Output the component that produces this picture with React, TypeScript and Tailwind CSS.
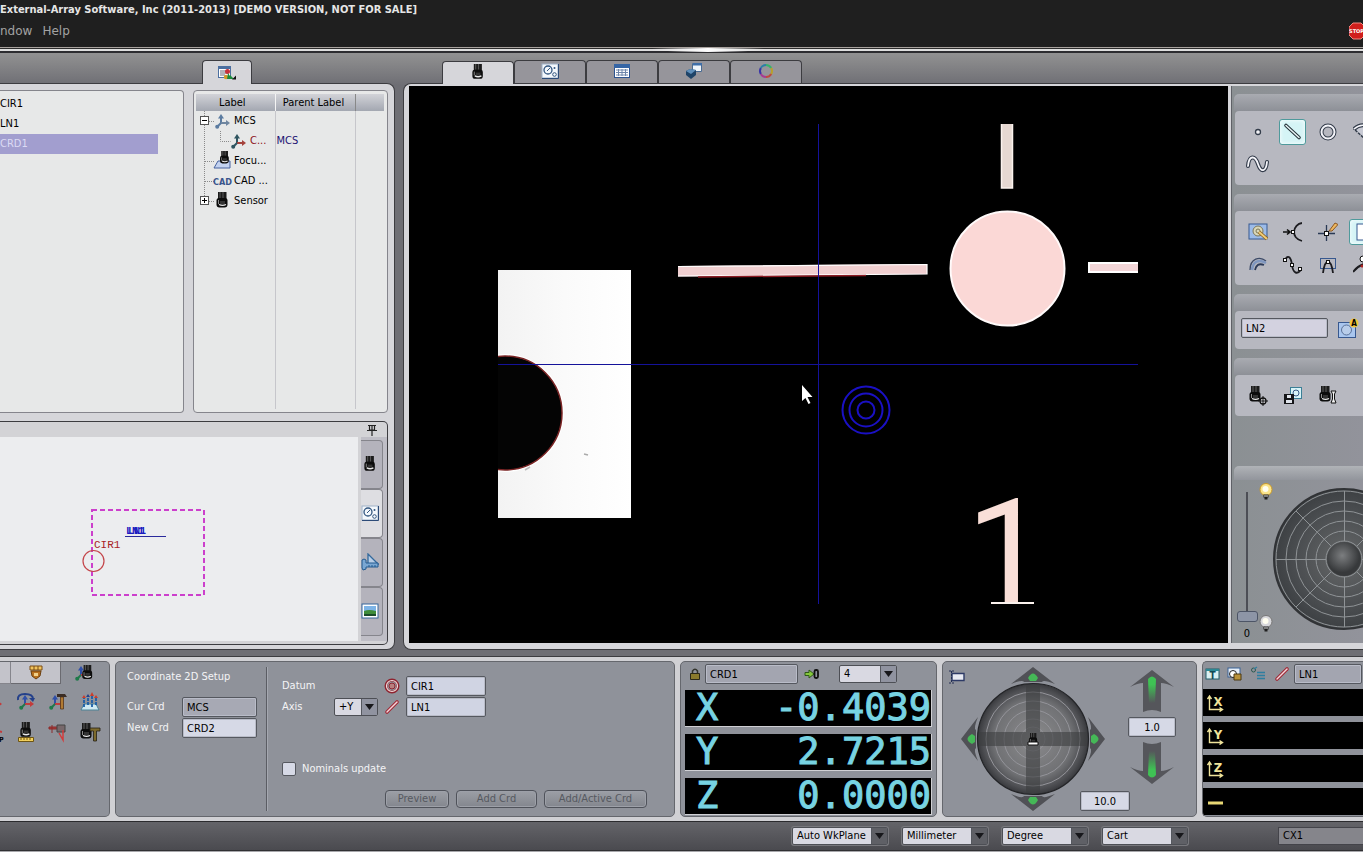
import React from "react";

type Kids = { children?: React.ReactNode };

/* ---------- icon parts ---------- */

function SensorShape({ t = "" }: { t?: string }) {
  return (
    <g transform={t}>
      <rect x="4" y="0" width="8.500" height="8" fill="#1b1b1b" />
      <path d="M6 0v6M9 0v6" stroke="#5d5d5d" strokeWidth="1" />
      <path d="M2.500 8.500Q2.500 6 5 6h6q2.500 0 2.500 2.500v4q0 3-3 3h-5q-3 0-3-3z" fill="#0c0c0c" />
      <path d="M4.500 8v4" stroke="#8a8a8a" />
      <path d="M6 9h5v3h-5z" fill="#333" />
      <path d="M5 12.500q3.500 1.800 7 0" stroke="#e8e8e8" strokeWidth="1.400" fill="none" />
    </g>
  );
}

function Ico({ children, s = 20 }: Kids & { s?: number }) {
  return (
    <svg width={s} height={s} viewBox={`0 0 ${s} ${s}`} className="shrink-0" aria-hidden="true">
      {children}
    </svg>
  );
}

function Axes({ t = "", x = "#c33b3b", y = "#2f4fa8", z = "#1f7a4a" }: { t?: string; x?: string; y?: string; z?: string }) {
  return (
    <g transform={t} fill="none" strokeWidth="2">
      <path d="M6 9V2" stroke={y} />
      <path d="M3 4.500L6 0l3 4.500z" fill={y} stroke="none" />
      <path d="M6 9h6" stroke={x} />
      <path d="M11 6l4 3-4 3z" fill={x} stroke="none" />
      <path d="M6 9l-4 4" stroke={z} />
      <circle cx="2.200" cy="12.800" r="2" fill={z} stroke="none" />
    </g>
  );
}

function GaugeIcon() {
  return (
    <Ico s={18}>
      <rect x="1" y="2" width="16" height="14" fill="#f4f8fc" stroke="#9fb2c8" />
      <path d="M1 16.500h16.500V2" stroke="#2c4b78" fill="none" />
      <circle cx="7" cy="8" r="4" fill="none" stroke="#31557f" strokeWidth="1.300" />
      <path d="M6 9l3-3" stroke="#31557f" />
      <circle cx="13.500" cy="6" r="1" fill="#31557f" />
      <circle cx="13.500" cy="12.500" r="1.800" fill="none" stroke="#31557f" />
    </Ico>
  );
}

const lcd = "font-['DejaVu_Sans_Mono','Liberation_Mono',monospace] [-webkit-text-stroke:1px_#77d3e2]";

/* ---------- controls ---------- */

function Field({ id, value, label, className = "" }: { id: string; value: string; label: string; className?: string }) {
  return (
    <input
      id={id}
      aria-label={label}
      defaultValue={value}
      className={`h-5 min-w-0 rounded-[2px] border border-[#55585f] px-1 text-[11px] text-black shadow-[inset_0_0_0_1px_#b9bcc8] outline-none ${className}`}
    />
  );
}

function Combo({ label, value, options, className = "", dark = false }: { label: string; value: string; options: string[]; className?: string; dark?: boolean }) {
  return (
    <div className={`relative flex h-[18px] rounded-[2px] border border-[#4d4f55] bg-[#d9d9e2] ${className}`}>
      <select aria-label={label} defaultValue={value} className="w-full appearance-none bg-transparent pl-1 text-[11px] leading-4 text-black outline-none">
        {options.map((o) => (
          <option key={o}>{o}</option>
        ))}
      </select>
      <span className={`pointer-events-none absolute inset-y-0 right-0 flex w-4 items-center justify-center border-l border-[#55585f] ${dark ? "bg-[#5f6066]" : "bg-[#9093a0]"}`}>
        <svg width="9" height="6" viewBox="0 0 9 6" aria-hidden="true">
          <path d="M0 0h9L4.500 6z" fill="#17171b" />
        </svg>
      </span>
    </div>
  );
}

function IconButton({ label, active = false, className = "", children }: Kids & { label: string; active?: boolean; className?: string }) {
  return (
    <button
      aria-label={label}
      className={`flex shrink-0 items-center justify-center ${active ? "rounded-[3px] border border-[#4f9a9c] bg-[#d5f4f6] shadow-[inset_0_0_4px_#ffffff]" : ""} ${className}`}
    >
      {children}
    </button>
  );
}

/* ---------- header ---------- */

function Header() {
  return (
    <header className="shrink-0">
      <div className="h-5 overflow-hidden whitespace-nowrap bg-[#1f1f1f] text-[11px] font-bold leading-[19px] text-[#e6e6e6]">
        External-Array Software, Inc (2011-2013) [DEMO VERSION, NOT FOR SALE]
      </div>
      <nav className="flex h-[27px] items-center gap-[10px] bg-[#1f1f1f] pb-[6px] font-['DejaVu_Sans',sans-serif] text-[12px] text-[#a3a3a3]">
        <a href="#window">ndow</a>
        <a href="#help">Help</a>
        <button aria-label="Stop" className="-mr-2 ml-auto">
          <svg width="22" height="18" viewBox="0 0 22 18" aria-hidden="true">
            <path d="M4 1h8l4 4v8l-4 4H4l-4-4V5z" fill="#d01f1c" stroke="#f08a80" />
            <text x="7.500" y="11" fontSize="5" fontWeight="bold" textAnchor="middle" fill="#fff">STOP</text>
          </svg>
        </button>
      </nav>
      <div className="h-px bg-[#a9a39f]" />
      <div className="flex h-px justify-center bg-[#2b2b2b] pl-[52px]">
        <div className="w-28 bg-[linear-gradient(90deg,transparent,#ffffff,transparent)]" />
      </div>
      <div className="flex h-0.5 justify-center bg-[#dedede] pl-[52px]">
        <div className="w-28 bg-[linear-gradient(90deg,transparent,#ffffff,transparent)]" />
      </div>
      <div className="flex h-0.5 justify-center bg-[#2d2d30] pl-[52px]">
        <div className="h-px w-20 bg-[linear-gradient(90deg,transparent,#ffffff,transparent)]" />
      </div>
    </header>
  );
}

/* ---------- left column ---------- */

function TreeGutter({ child = false, sign, last = false, children }: Kids & { child?: boolean; sign?: "+" | "-"; last?: boolean }) {
  return (
    <svg width={child ? 54 : 38} height="20" viewBox={`0 0 ${child ? 54 : 38} 20`} className="shrink-0" aria-hidden="true">
      <g stroke="#8a8a8a" strokeDasharray="1 1" fill="none">
        <path d={last ? "M8.500 0v6" : "M8.500 0v20"} />
        {child ? <path d="M24.500 0v10.500h10" /> : <path d="M9 10.500h9" />}
      </g>
      {sign && (
        <g>
          <rect x="4.500" y="5.500" width="8" height="8" fill="#fff" stroke="#555" />
          <path d={sign === "+" ? "M6 9.500h5M8.500 7v5" : "M6 9.500h5"} stroke="#000" />
        </g>
      )}
      {children}
    </svg>
  );
}

function TreeTable() {
  const rows = [
    { label: "MCS", parent: "", g: <TreeGutter sign="-"><Axes t="translate(19 3)" x="#6f86a0" y="#5b7ba0" z="#5b7ba0" /></TreeGutter> },
    { label: "C...", parent: "MCS", g: <TreeGutter child><Axes t="translate(35 3)" x="#a5423c" y="#2f5560" z="#2f5560" /></TreeGutter> },
    { label: "Focu...", parent: "", g: <TreeGutter><path d="M22 10h12v7H18z" fill="#c3d2f0" stroke="#46629f" /><SensorShape t="translate(22 0) scale(.8)" /></TreeGutter> },
    { label: "CAD ...", parent: "", g: <TreeGutter><text x="26.500" y="14" fontSize="9" fontWeight="bold" textAnchor="middle" fill="#3a558c" fontFamily="DejaVu Sans Condensed">CAD</text></TreeGutter> },
    { label: "Sensor", parent: "", g: <TreeGutter sign="+" last><SensorShape t="translate(18 1)" /></TreeGutter> },
  ];
  return (
    <table className="h-full w-full table-fixed border-collapse text-[11px] text-black">
      <colgroup>
        <col className="w-[79px]" />
        <col className="w-20" />
        <col />
      </colgroup>
      <thead>
        <tr className="h-[17px] bg-[linear-gradient(#d2d3d8,#a3a7b1)]">
          <th className="h-[17px] border-r border-[#f4f4f4] p-0 pr-[6px] text-center font-normal leading-4">Label</th>
          <th className="h-[17px] border-r border-[#888] p-0 pr-[3px] text-center font-normal leading-4">Parent Label</th>
          <th className="h-[17px] p-0" />
        </tr>
      </thead>
      <tbody>
        {rows.map((r, i) => (
          <tr key={r.label} className="h-5">
            <td className="h-5 border-r border-[#c6c6cb] p-0">
              <div className={`flex h-5 items-center overflow-hidden whitespace-nowrap ${i === 1 ? "text-[#8c1420]" : ""}`}>
                {r.g}
                {r.label}
              </div>
            </td>
            <td className="h-5 border-r border-[#c6c6cb] p-0 pl-px text-[#1c1272]">{r.parent}</td>
            <td className="h-5 p-0" />
          </tr>
        ))}
        <tr>
          <td className="border-r border-[#c6c6cb]" />
          <td className="border-r border-[#c6c6cb]" />
          <td />
        </tr>
      </tbody>
    </table>
  );
}

function SideTab({ label, active = false, children }: Kids & { label: string; active?: boolean }) {
  return (
    <button
      aria-label={label}
      className={`flex h-[49px] w-[22px] items-center justify-center rounded-r border border-l-0 border-[#85858c] pb-0.5 pr-[3px] ${active ? "bg-[#dedee2]" : "bg-[#b4b3bc]"}`}
    >
      {children}
    </button>
  );
}

function LeftColumn() {
  return (
    <section className="flex w-[395px] shrink-0 flex-col">
      <div className="flex h-[30px] items-end pl-[202px]">
        <button aria-label="Labels" className="relative z-10 -mb-px flex h-[24px] w-[50px] items-center justify-center rounded-t-[4px] border border-b-0 border-[#3c3c40] bg-[#d6d6da]">
          <Ico s={20}>
            <rect x="1.500" y="3.500" width="12" height="11" fill="#fff" stroke="#4c6fa0" />
            <path d="M1 3h13v3H1z" fill="#4c6fa0" />
            <path d="M3 8h7M3 10h7M3 12h5" stroke="#667" />
            <circle cx="10.500" cy="8.500" r="2.500" fill="#c8303b" />
            <circle cx="9" cy="14" r="2.200" fill="#cf9a2c" />
            <path d="M11 10l4 6h-5zM13 12l4 4h-4z" fill="#1c8a3a" />
            <path d="M15 16.500l4-4v4z" fill="#111" />
          </Ico>
        </button>
      </div>
      <div className="flex flex-1 flex-col rounded-r-lg border border-l-0 border-[#3c3c40] bg-[#d6d6da] pb-1 pr-[6px] pt-[6px]">
        <div className="flex h-[323px] gap-[9px]">
          <ul className="w-[184px] rounded-r-[4px] border border-l-0 border-[#85858c] bg-[#e7e8e8] pr-[25px] pt-[3px] text-[11px] leading-5 text-black">
            <li>CIR1</li>
            <li>LN1</li>
            <li className="bg-[#a29ecf] text-[#dcdaf4]">CRD1</li>
          </ul>
          <div className="flex-1 rounded-[4px] border border-[#85858c] bg-[#e7e8e8] p-[3px] pl-0.5">
            <TreeTable />
          </div>
        </div>
        <div className="mt-2 flex flex-1 flex-col rounded-r-[5px] border border-l-0 border-[#3c3c40] bg-[#d3d3d6] pb-[3px]">
          <div className="flex h-[15px] justify-end pr-[9px]">
            <button aria-label="Pin panel">
              <svg width="12" height="12" viewBox="0 0 12 12" aria-hidden="true">
                <path d="M2 1.500h8M3.500 1v5h5V1M6 1v5M1 6.500h10M6 7v5" stroke="#222" fill="none" strokeWidth="1.200" />
              </svg>
            </button>
          </div>
          <div className="flex flex-1">
            <div className="flex-1 overflow-hidden bg-[#ecedef]">
              <svg width="356" height="204" viewBox="0 0 356 204" aria-label="Part view">
                <rect x="92" y="73" width="112" height="85" fill="none" stroke="#cc3fcc" strokeWidth="2" strokeDasharray="5 3" />
                <circle cx="93.500" cy="124" r="10.500" fill="none" stroke="#c4454a" strokeWidth="1.200" />
                <text x="94" y="111" fontSize="11" fill="#a82226" fontFamily="Liberation Mono">CIR1</text>
                <text x="126" y="97" fontSize="10" fontWeight="bold" fill="#1a1ac0" fontFamily="Liberation Mono">LN1</text>
                <text x="128" y="97" fontSize="10" fontWeight="bold" fill="#1a1ac0" fontFamily="Liberation Mono">LN1</text>
                <path d="M125 99.500h41" stroke="#2a2a9c" strokeWidth="1.200" />
              </svg>
            </div>
            <div className="ml-[3px] w-[26px] bg-[#bfbec6] pt-[3px]">
              <SideTab label="Sensor view"><Ico s={16}><SensorShape t="scale(.95)" /></Ico></SideTab>
              <SideTab label="Part view" active><GaugeIcon /></SideTab>
              <SideTab label="Measure view">
                <Ico s={18}>
                  <path d="M7 1v10h10z" fill="#b7cde6" stroke="#32699c" strokeWidth="1.300" />
                  <path d="M1 7l2-1 2 1v3h12v4H5v2l-3 1-1-2z" fill="#7aa7d2" stroke="#235b90" />
                  <path d="M8 12v2M11 12v2M14 12v2" stroke="#235b90" />
                </Ico>
              </SideTab>
              <SideTab label="Image view">
                <Ico s={18}>
                  <rect x="1" y="2" width="16" height="14" fill="#fff" stroke="#35679b" />
                  <rect x="3" y="4" width="12" height="5" fill="#7db4e6" />
                  <path d="M3 9q5-2 12 0v5H3z" fill="#3f8d3a" />
                  <path d="M3 12h12v2H3z" fill="#1b4d2a" />
                </Ico>
              </SideTab>
            </div>
          </div>
        </div>
      </div>
    </section>
  );
}

/* ---------- camera view ---------- */

function ViewTabs() {
  const base = "flex h-[23px] w-[72px] items-center justify-center rounded-t-[4px] border border-b-0 border-[#3c3c40] pb-0.5";
  return (
    <div className="flex h-[30px] items-end pl-[39px]">
      <button aria-label="Camera" className={`${base} relative z-10 -mb-px h-6 bg-[#d6d6da]`}><Ico s={16}><SensorShape t="scale(.95)" /></Ico></button>
      <button aria-label="Part" className={`${base} bg-[#96959b]`}><GaugeIcon /></button>
      <button aria-label="Table" className={`${base} bg-[#96959b]`}>
        <Ico s={18}>
          <rect x="1.500" y="2.500" width="15" height="13" fill="#fff" stroke="#2c5490" />
          <path d="M1 2h16v4H1z" fill="#3565a5" />
          <path d="M3 8h12M3 10.500h12M3 13h12M5.500 7v7M9 7v7M12.500 7v7" stroke="#6f87ab" />
        </Ico>
      </button>
      <button aria-label="Report" className={`${base} bg-[#96959b]`}>
        <Ico s={18}>
          <path d="M7.500 1.500h9v8h-9z" fill="#eef4fa" stroke="#4a6b92" />
          <path d="M8 1h9v2.500H8z" fill="#3f6ea8" />
          <path d="M1 9l4-2 6 1v5l-5 4-5-4z" fill="#1f4468" />
          <path d="M1 9l5 3 5-4-6-1z" fill="#5f90bc" />
        </Ico>
      </button>
      <button aria-label="Colour map" className={`${base} bg-[#96959b]`}>
        <Ico s={18}>
          <g fill="none" strokeWidth="2">
            <path d="M9 3a6 6 0 0 1 5.200 3" stroke="#35b46c" />
            <path d="M14.200 6a6 6 0 0 1 0 6" stroke="#b8a02c" />
            <path d="M14.200 12A6 6 0 0 1 9 15" stroke="#c04a3c" />
            <path d="M9 15a6 6 0 0 1-5.200-3" stroke="#a83a92" />
            <path d="M3.800 12a6 6 0 0 1 0-6" stroke="#3a35a8" />
            <path d="M3.800 6A6 6 0 0 1 9 3" stroke="#2c7fa6" />
          </g>
        </Ico>
      </button>
    </div>
  );
}

function CameraView() {
  return (
    <div className="flex min-w-0 flex-1 items-center justify-center overflow-hidden bg-black pb-0.5 pr-0.5">
      <svg width="640" height="480" viewBox="0 0 640 480" className="shrink-0 overflow-visible" role="img" aria-label="Camera image">
        <defs>
          <clipPath id="part"><rect x="0" y="146" width="133" height="248" /></clipPath>
          <linearGradient id="paper" x1="0" x2="1"><stop offset="0" stopColor="#f3f3f3" /><stop offset=".5" stopColor="#fafafa" /><stop offset="1" stopColor="#fff" /></linearGradient>
        </defs>
        <rect x="0" y="146" width="133" height="248" fill="url(#paper)" />
        <g clipPath="url(#part)">
          <circle cx="7" cy="289" r="59" fill="#fff" />
          <circle cx="7" cy="289" r="57" fill="#040404" stroke="#7a2424" strokeWidth="1.500" />
        </g>
        <path d="M86 330l4 1" stroke="#aaa" strokeWidth="1.500" />
        <path d="M27 346l5-3" stroke="#bbb" strokeWidth="1.500" />
        <path d="M180 142l249-2v10l-249 2.500z" fill="#f0cfd0" />
        <path d="M180 142.500l249-2v9.500l-249 2" fill="none" stroke="#fff" strokeWidth="1.200" />
        <path d="M200 153l168-1.600" stroke="#8c1a22" strokeWidth="1.500" />
        <rect x="503.500" y="0" width="11" height="64" fill="#e6d8d2" />
        <path d="M503.500 0v64h11V0" fill="none" stroke="#fbf2ee" strokeWidth="1.500" />
        <circle cx="509.500" cy="144.500" r="57" fill="#fbd8d6" stroke="#fffafa" strokeWidth="2" />
        <path d="M640 139h-49v9h49" fill="#f3d6d8" stroke="#fff" strokeWidth="2" />
        <text x="468" y="479" fontSize="146" fill="#f9dfd8" fontFamily="Roboto, sans-serif">1</text>
        <rect x="493" y="478" width="43" height="2" fill="#fbf2ee" />
        <path d="M320.500 0v480M0 240.500h640" stroke="#14129a" strokeWidth="1" />
        <g fill="none" stroke="#1a10c4" strokeWidth="2">
          <circle cx="368" cy="286" r="23.500" />
          <circle cx="368" cy="286" r="16.500" />
          <circle cx="368" cy="286" r="8.500" />
        </g>
        <path d="M304 261v16l3.500-3 3 6 2-1-3-6h5z" fill="#fff" />
      </svg>
    </div>
  );
}

/* ---------- tool sidebar ---------- */

function Group({ title, className = "", children }: Kids & { title: string; className?: string }) {
  return (
    <section aria-label={title} className="mb-[9px]">
      <div className="ml-0.5 h-[17px] rounded-tl-[5px] bg-[linear-gradient(#a9abb1,#8d9097)]" />
      <div className={`ml-[3px] overflow-hidden rounded-l-[4px] bg-[#b7b8c0] ${className}`}>{children}</div>
    </section>
  );
}

const cell = "h-[26px] w-[27px] mx-1";

function Bulb({ on = false }: { on?: boolean }) {
  return (
    <svg width="14" height="17" viewBox="0 0 14 17" aria-hidden="true">
      <circle cx="7" cy="6.500" r="6" fill={on ? "#fbe48a" : "#d8d8dc"} stroke={on ? "#c99a2c" : "#777"} />
      <circle cx="6.500" cy="6" r="3" fill="#fffef0" />
      <path d="M4.500 11.500h5v3h-1v2h-3v-2h-1z" fill="#1f1f1f" />
      <path d="M5 13h4" stroke="#ddd" />
    </svg>
  );
}

function Sidebar() {
  return (
    <aside className="ml-[3px] flex w-[132px] shrink-0 flex-col overflow-hidden border-l border-[#5f6167] bg-[linear-gradient(90deg,#8b9093,#92939b)] pt-2">
      <Group title="Features" className="h-[74px]">
        <div className="flex w-[150px] flex-wrap gap-y-[6px] pl-[5px] pt-[8px]">
          <IconButton label="Point" className={cell}><Ico><circle cx="10" cy="10" r="2.500" fill="#f2f2f6" stroke="#333c4a" strokeWidth="1.300" /></Ico></IconButton>
          <IconButton label="Line" active className={cell}><Ico><path d="M3 3.500l13 12" stroke="#26333a" strokeWidth="3.600" strokeLinecap="round" /><path d="M3 3.500l13 12" stroke="#e8f4f6" strokeWidth="1.500" strokeLinecap="round" /></Ico></IconButton>
          <IconButton label="Circle" className={cell}><Ico><circle cx="10" cy="10" r="6.500" fill="none" stroke="#333c4a" strokeWidth="4" /><circle cx="10" cy="10" r="6.500" fill="none" stroke="#f5f5fa" strokeWidth="2" /></Ico></IconButton>
          <IconButton label="Arc" className={cell}><Ico><path d="M1 7q8-7 16-1L12 17z" fill="#c8cad4" stroke="#333c4a" strokeWidth="1.500" strokeDasharray="3 1" /><path d="M1 7q8-7 16-1" fill="none" stroke="#333c4a" strokeWidth="4" /><path d="M1 7q8-7 16-1" fill="none" stroke="#f5f5fa" strokeWidth="1.500" /></Ico></IconButton>
          <IconButton label="Curve" className={cell}><svg width="24" height="20" viewBox="0 0 24 20" aria-hidden="true"><path d="M2 12C3 1 9 1 12 10s8 8 9-2" fill="none" stroke="#333c4a" strokeWidth="4" strokeLinecap="round" /><path d="M2 12C3 1 9 1 12 10s8 8 9-2" fill="none" stroke="#f5f5fa" strokeWidth="1.800" strokeLinecap="round" /></svg></IconButton>
        </div>
      </Group>
      <Group title="Probing tools" className="h-[74px]">
        <div className="flex w-[150px] flex-wrap gap-y-[7px] pl-[5px] pt-[8px]">
          <IconButton label="Pick" className={cell}><Ico><rect x="1" y="2" width="18" height="15" fill="#9cbbe8" stroke="#37588f" /><circle cx="10" cy="9" r="5" fill="#d9d7b8" stroke="#7c775a" /><circle cx="10" cy="9" r="2" fill="none" stroke="#7c775a" /><path d="M11 10l8 7" stroke="#8a5f1c" strokeWidth="3.500" /><path d="M11 10l8 7" stroke="#f0cd78" strokeWidth="2" /></Ico></IconButton>
          <IconButton label="Edge" className={cell}><Ico><path d="M19 1c-9 1-12 15 0 18" fill="none" stroke="#1c1c20" strokeWidth="1.800" /><path d="M0 10h6M4 7.500l3 2.500-3 2.500" fill="none" stroke="#111" strokeWidth="1.600" /><rect x="8.500" y="8.500" width="3" height="3" fill="#fff" stroke="#111" /></Ico></IconButton>
          <IconButton label="Cross" className={cell}><Ico><path d="M8.500 3v16M0 11.500h17" stroke="#2a3a55" strokeWidth="1.300" /><rect x="6.500" y="9.500" width="4" height="4" fill="#fff" stroke="#111" /><path d="M11 9l6-8 3 1.500-6 6.500z" fill="#eeb860" stroke="#8a5620" /></Ico></IconButton>
          <IconButton label="Strip" active className={cell}><Ico><rect x="4" y="2" width="8" height="16" fill="#fff" stroke="#37588f" /></Ico></IconButton>
          <IconButton label="Arc band" className={cell}><Ico><path d="M2 15C2 3 12 1 18 6" stroke="#3d4b68" strokeWidth="1.300" fill="none" /><path d="M4 15C5 6 11 4 18 8" stroke="#7f97c0" strokeWidth="2.500" fill="none" /><path d="M7 15C8 10 11 8 16 10" stroke="#2b3a58" strokeWidth="1.800" fill="none" /></Ico></IconButton>
          <IconButton label="Trace" className={cell}><Ico><path d="M2 5C5-1 8 2 9 10s5 10 9 5" fill="none" stroke="#1c1c20" strokeWidth="1.800" /><g fill="#fff" stroke="#111"><rect x=".5" y="3.500" width="3" height="3" /><rect x="7.500" y="8.500" width="3" height="3" /><rect x="15.500" y="12.500" width="3" height="3" /></g></Ico></IconButton>
          <IconButton label="Peak" className={cell}><Ico><rect x="2.500" y="3.500" width="15" height="10" fill="none" stroke="#37588f" /><path d="M5 18C7 3 13 3 15 18" fill="none" stroke="#1c1c20" strokeWidth="1.800" /><rect x="8.500" y="5.500" width="3" height="3" fill="#fff" stroke="#111" /></Ico></IconButton>
          <IconButton label="Tangent" className={cell}><Ico><path d="M0 17Q6 9 16 8" fill="none" stroke="#1c1c20" strokeWidth="2" /><circle cx="10" cy="4" r="3" fill="#fff" stroke="#111" /><circle cx="9" cy="11" r="1.500" fill="#a22" /></Ico></IconButton>
        </div>
      </Group>
      <Group title="Name" className="flex h-[38px] items-start gap-[9px] pl-[6px] pt-[7px]">
        <Field id="feature" label="Feature name" value="LN2" className="w-[87px] shrink-0 bg-[#d3d2e0]" />
        <IconButton label="Auto name">
          <Ico s={22}><rect x="1.500" y="4.500" width="17" height="15" fill="#a9c6ee" stroke="#37588f" /><circle cx="9.500" cy="12" r="5" fill="#b8cdea" stroke="#5b7299" /><circle cx="17" cy="5" r="4.500" fill="#f0c63c" /><text x="17" y="8" fontSize="8" fontWeight="bold" textAnchor="middle">A</text></Ico>
        </IconButton>
      </Group>
      <Group title="Sensor tools" className="flex h-[41px] items-center pl-[5px]">
        <IconButton label="Sensor target" className={cell}><Ico><SensorShape t="translate(-1 0)" /><circle cx="15" cy="15" r="3" fill="#e8e8ee" stroke="#111" strokeWidth="1.300" /><path d="M15 10v10M10 15h10" stroke="#111" /></Ico></IconButton>
        <IconButton label="Save sensor" className={cell}><Ico><rect x="7.500" y="1.500" width="11" height="11" fill="#d8f4f8" stroke="#3b7f96" /><circle cx="13" cy="7" r="3" fill="none" stroke="#3a5a86" /><path d="M1 8h10v10H1z" fill="#151518" /><path d="M4 9h4v3H4zM3 14h6v3H3z" fill="#dfe3ea" /></Ico></IconButton>
        <IconButton label="Sensor calibration" className={cell}><Ico><SensorShape t="translate(-1 0)" /><path d="M13 5h5l-1.500 3v5l1.500 4h-5l1.500-4V8z" fill="#f2f2f2" stroke="#111" /></Ico></IconButton>
      </Group>
      <section aria-label="Light" className="mt-auto">
        <div className="ml-0.5 h-[14px] rounded-tl-[5px] bg-[linear-gradient(#b0b3b7,#92959c)]" />
        <div className="flex h-[163px]">
          <div className="ml-1 flex w-[22px] flex-col items-center pt-3">
            <input
              type="range"
              min={0}
              max={100}
              defaultValue={0}
              aria-label="Light intensity"
              className="m-0 h-[130px] w-[22px] appearance-none bg-transparent bg-[linear-gradient(#4c4e55,#4c4e55)] bg-[length:2px_100%] bg-center bg-no-repeat [direction:rtl] [writing-mode:vertical-lr] [&::-webkit-slider-thumb]:h-[11px] [&::-webkit-slider-thumb]:w-[21px] [&::-webkit-slider-thumb]:appearance-none [&::-webkit-slider-thumb]:rounded-[3px] [&::-webkit-slider-thumb]:border [&::-webkit-slider-thumb]:border-[#4d5566] [&::-webkit-slider-thumb]:bg-[#8d95a6]"
            />
            <output className="pt-1 text-[11px] leading-4 text-black">0</output>
          </div>
          <div className="ml-px flex w-[14px] shrink-0 flex-col justify-between pb-[11px] pt-[3px]">
            <Bulb on />
            <Bulb />
          </div>
          <svg width="142" height="142" viewBox="-71 -71 142 142" className="mt-2 shrink-0" role="img" aria-label="Ring light">
            <defs>
              <radialGradient id="ring"><stop offset="0" stopColor="#666869" /><stop offset=".7" stopColor="#4a4d50" /><stop offset="1" stopColor="#3d4043" /></radialGradient>
              <radialGradient id="knob" cx=".45" cy=".4"><stop offset="0" stopColor="#7c7e80" /><stop offset="1" stopColor="#37393b" /></radialGradient>
            </defs>
            <circle r="70" fill="url(#ring)" stroke="#313336" strokeWidth="2" />
            <g fill="none" stroke="#8f9396" strokeWidth="1">
              <circle r="68" /><circle r="58" /><circle r="48" /><circle r="38" /><circle r="28" /><circle r="18" />
              <path d="M-68 .5h50M18 .5h50M.5-68v50M.5 18v50M-48-48l35 35M48 48l-35-35M-48 48l35-35M48-48l-35 35" />
            </g>
            <circle r="17" fill="url(#knob)" />
          </svg>
        </div>
      </section>
    </aside>
  );
}

/* ---------- bottom dock ---------- */

const panel = "rounded-[5px] border border-[#65676d] bg-[#8f929a]";

function AxisButtons() {
  return (
    <div className={`w-[110px] shrink-0 overflow-hidden ${panel} rounded-l-none border-l-0`}>
      <div className="flex h-[22px]">
        <button aria-label="Setup" className="w-[11px] border-b border-r border-[#85858c] bg-[#c3c3ca]" />
        <button aria-label="Machine" className="flex w-[50px] items-center justify-center border-b border-r border-[#6a6a70] bg-[#c3c3ca]">
          <Ico s={16}><path d="M2 1h12v4H2z" fill="#f2c45c" stroke="#7a4c14" /><path d="M6 1v4M10 1v4" stroke="#7a4c14" /><path d="M3 6h10l-1 5-4 3-4-3z" fill="#b8701f" stroke="#6b3f10" /><path d="M6 8h4v3H6z" fill="#f0d08a" /></Ico>
        </button>
        <button aria-label="Coordinates" className="flex flex-1 items-center justify-center"><svg width="20" height="16" viewBox="0 0 20 16" aria-hidden="true"><Axes t="translate(0 1)" /><SensorShape t="translate(5 0) scale(.9)" /></svg></button>
      </div>
      <div className="-ml-[22px] flex w-[128px] flex-wrap gap-y-[9px] pt-[7px]">
        <button aria-label="Rotate X" className="flex w-8 justify-center"><svg width="22" height="22" viewBox="0 0 22 22" aria-hidden="true"><Axes t="translate(4 4)" /></svg></button>
        <button aria-label="Rotate Y" className="flex w-8 justify-center"><svg width="20" height="22" viewBox="0 0 20 22" aria-hidden="true"><Axes t="translate(3 4)" /><path d="M2 9q-1-6 7-6t8 5" stroke="#24408a" strokeWidth="2" fill="none" /><path d="M13 7h6l-2 4z" fill="#24408a" /></svg></button>
        <button aria-label="Align axes" className="flex w-8 justify-center"><svg width="20" height="22" viewBox="0 0 20 22" aria-hidden="true"><Axes t="translate(1 4)" /><path d="M12.500 6h3v12h-3z" fill="#b07a32" stroke="#54351a" strokeWidth=".8" /><path d="M9 3h8l2 3h-10z" fill="#3a2c24" /></svg></button>
        <button aria-label="Surface" className="flex w-8 justify-center"><svg width="20" height="22" viewBox="0 0 20 22" aria-hidden="true"><path d="M4 13h12l3 6H1z" fill="#cfe9f2" stroke="#4a8296" /><path d="M4 16V7M8 14V5M12 16V5M16 14V7" stroke="#1a5ca6" strokeWidth="1.800" strokeDasharray="3 1" /><path d="M2 7l2-3 2 3M10 5l2-4 2 4M14 7l2-3 2 3" fill="#cc3e2a" /><path d="M6 6l2-3 2 3" fill="#24408a" /></svg></button>
        <button aria-label="Probe" className="flex w-8 justify-center"><svg width="22" height="22" viewBox="0 0 22 22" aria-hidden="true"><path d="M14 9l5 1" stroke="#c33b3b" strokeWidth="2" /><text x="16" y="20" fontSize="7" fontWeight="bold">P</text></svg></button>
        <button aria-label="Scale" className="flex w-8 justify-center"><svg width="20" height="22" viewBox="0 0 20 22" aria-hidden="true"><SensorShape t="translate(2 0) scale(.95)" /><path d="M2.500 15.500h15v4h-15z" fill="#f2d05c" stroke="#6e5514" /><path d="M5 16v2M8 16v2M11 16v2M14 16v2" stroke="#6e5514" /></svg></button>
        <button aria-label="Caliper" className="flex w-8 justify-center"><svg width="20" height="22" viewBox="0 0 20 22" aria-hidden="true"><path d="M1 5h10v2H1zM4 3v8" fill="#a83c3c" stroke="#8b2a2a" /><path d="M9 3h8v7H9z" fill="#77686b" stroke="#444" /><path d="M11 11l4 7V8" stroke="#d23b3b" strokeWidth="1.500" fill="none" /></svg></button>
        <button aria-label="Sensor setup" className="flex w-8 justify-center"><svg width="22" height="22" viewBox="0 0 22 22" aria-hidden="true"><SensorShape t="translate(-1 1)" /><path d="M11 6h10v3h-3.500v10h-3V9H11z" fill="#7d6a2c" stroke="#231f14" strokeWidth=".8" /></svg></button>
      </div>
    </div>
  );
}

function CirIcon() {
  return <Ico s={16}><circle cx="8" cy="8" r="6" fill="none" stroke="#8f2430" strokeWidth="3" /><circle cx="8" cy="8" r="5.500" fill="none" stroke="#f2dcdc" strokeWidth="1.200" /><circle cx="8" cy="8" r="3" fill="#b8807f" stroke="#8f2430" /></Ico>;
}

function LineIcon() {
  return <Ico s={16}><path d="M3 13L13 3" stroke="#a02836" strokeWidth="3.600" strokeLinecap="round" /><path d="M3 13L13 3" stroke="#f4d6da" strokeWidth="1.400" strokeLinecap="round" /></Ico>;
}

function CoordinateSetup() {
  const btn = "h-[18px] rounded-[4px] border border-[#4f525a] bg-[linear-gradient(#9c9fa6,#83868e)] text-[11px] leading-4 text-[#565960] shadow-[inset_0_0_0_1px_#9da0a8]";
  return (
    <form className={`flex w-[560px] shrink-0 ${panel} text-[11px] text-[#f4f4f6]`} onSubmit={(e) => e.preventDefault()}>
      <div className="my-[5px] w-[151px] border-r border-[#5b5d64] pl-[11px] shadow-[1px_0_0_#a5a8b0]">
        <h2 className="pt-[2px] leading-4">Coordinate 2D Setup</h2>
        <div className="mt-3 flex items-center"><label htmlFor="cur" className="w-[55px]">Cur Crd</label><Field id="cur" label="Cur Crd" value="MCS" className="w-[75px] bg-[#a7a9b4]" /></div>
        <div className="mt-px flex items-center"><label htmlFor="new" className="w-[55px]">New Crd</label><Field id="new" label="New Crd" value="CRD2" className="w-[75px] bg-[#d6d9e6]" /></div>
      </div>
      <div className="flex flex-1 flex-col pb-2 pl-[15px] pr-[27px] pt-[14px]">
        <div className="flex items-center"><label htmlFor="datum" className="w-[102px]">Datum</label><CirIcon /><Field id="datum" label="Datum" value="CIR1" className="ml-[6px] w-20 bg-[#d0d4e3]" /></div>
        <div className="mt-px flex items-center"><span className="w-[52px]">Axis</span><Combo label="Axis" value="+Y" options={["+X", "+Y", "-X", "-Y"]} className="mr-[6px] w-11" /><LineIcon /><Field id="axis" label="Axis feature" value="LN1" className="ml-[6px] w-20 bg-[#d0d4e3]" /></div>
        <label className="mt-11 flex items-center gap-[6px]">
          <input type="checkbox" className="m-0 h-[14px] w-[14px] appearance-none rounded-[2px] border border-[#55585f] bg-[#d6d9e6]" />
          Nominals update
        </label>
        <div className="mt-auto flex justify-end gap-[7px]">
          <button className={`${btn} w-16`}>Preview</button>
          <button className={`${btn} w-[81px]`}>Add Crd</button>
          <button className={`${btn} w-[103px]`}>Add/Active Crd</button>
        </div>
      </div>
    </form>
  );
}

function Readout() {
  return (
    <div className={`w-[257px] shrink-0 ${panel} px-1`}>
      <div className="flex h-[24px] items-center">
        <span className="flex w-5 justify-center"><svg width="10" height="12" viewBox="0 0 10 12" aria-hidden="true"><path d="M2.500 6V3q2.500-3.500 5 0v3" fill="none" stroke="#33342c" strokeWidth="1.500" /><path d="M.5 5.500h9v6h-9z" fill="#8a7a2c" stroke="#2b2818" /></svg></span>
        <Field id="crd" label="Coordinate system" value="CRD1" className="w-[93px] bg-[#a3a5b0]" />
        <button aria-label="Zero" className="ml-[6px] mr-[19px]"><svg width="16" height="12" viewBox="0 0 16 12" aria-hidden="true"><path d="M1 4.500h4V2l5 4-5 4V7.500H1z" fill="#86c83c" stroke="#2e5a18" /><rect x="10.500" y="2" width="3.500" height="8" rx="1.500" fill="none" stroke="#111" strokeWidth="1.800" /></svg></button>
        <Combo label="Decimals" value="4" options={["2", "3", "4"]} className="w-[58px]" />
      </div>
      <dl className="flex flex-col gap-[7px] pt-1">
        {[["X", "-0.4039"], ["Y", "2.7215"], ["Z", "0.0000"]].map(([a, v]) => (
          <div key={a} className={`flex h-[37px] items-center justify-between border-b border-r border-[#d0d0d4] bg-black text-[37px] leading-9 text-[#77d3e2] ${lcd}`}>
            <dt className="pl-[11px]">{a}</dt>
            <dd>{v}</dd>
          </div>
        ))}
      </dl>
    </div>
  );
}

function JogPanel() {
  return (
    <div className={`relative flex w-[255px] shrink-0 items-start ${panel}`}>
      <button aria-label="Jog mode" className="absolute left-[5px] top-[8px]"><svg width="18" height="14" viewBox="0 0 18 14" aria-hidden="true"><path d="M4 3.500h12v7H4z" fill="#e8eaf2" stroke="#2d3a66" strokeWidth="1.400" /><path d="M1 1h5M1 13h5M3.500 1v12" stroke="#222d52" strokeDasharray="2 1" /></svg></button>
      <svg width="144" height="144" viewBox="-72 -72 144 144" className="ml-[18px] mt-[5px] shrink-0" role="img" aria-label="Joystick">
        <defs>
          <radialGradient id="stick"><stop offset="0" stopColor="#8c8c8e" /><stop offset=".7" stopColor="#707174" /><stop offset=".9" stopColor="#4e4f53" /><stop offset="1" stopColor="#38393d" /></radialGradient>
        </defs>
        {[0, 90, 180, 270].map((a) => (
          <g key={a} transform={`rotate(${a})`}>
            <path d="M0-72L22-55Q10-60 9-57h-18Q-10-60-22-55z" fill="#505156" />
            <path d="M-5-61q5-9 10 0l-2 3h-6z" fill="#45b857" />
          </g>
        ))}
        <circle r="55.500" fill="url(#stick)" stroke="#232427" strokeWidth="1.200" />
        <g fill="none" stroke="#94949a" strokeWidth="1"><circle r="47" /><circle r="38" /><circle r="29" /><circle r="20" /><circle r="12" /></g>
        <path d="M-7-54h14v108h-14zM-54-7h108v14h-108z" fill="#3c3d40" fillOpacity=".6" />
        <SensorShape t="translate(-6 -6) scale(.75)" />
        <path d="M-5 3h10v3h-10z" fill="#fff" stroke="#111" />
      </svg>
      <div className="ml-[23px] flex flex-col items-center pt-2">
        <button aria-label="Z up"><svg width="44" height="42" viewBox="0 0 44 42" className="block" aria-hidden="true"><defs><linearGradient id="glow" x1="0" x2="0" y1="0" y2="1"><stop offset=".3" stopColor="#3fc254" /><stop offset="1" stopColor="#55565b" /></linearGradient></defs><path d="M22 0l22 17q-8-4-13-4v29q-9-4-18 0V13q-5 0-13 4z" fill="#55565b" /><path d="M18 9q4-5 8 0l-1 24h-6z" fill="url(#glow)" /></svg></button>
        <Field id="zstep" label="Z step" value="1.0" className="mt-[5px] w-12 bg-[#d6d9e6] text-center" />
        <button aria-label="Z down" className="mt-[5px]"><svg width="44" height="42" viewBox="0 0 44 42" className="block" aria-hidden="true"><g transform="rotate(180 22 21)"><path d="M22 0l22 17q-8-4-13-4v29q-9-4-18 0V13q-5 0-13 4z" fill="#55565b" /><path d="M18 9q4-5 8 0l-1 24h-6z" fill="url(#glow)" /></g></svg></button>
      </div>
      <Field id="xystep" label="XY step" value="10.0" className="absolute bottom-[5px] right-[66px] w-[50px] bg-[#d6d9e6] text-center" />
    </div>
  );
}

function ResultPanel() {
  return (
    <div className={`min-w-0 flex-1 overflow-hidden ${panel} rounded-r-none border-r-0`}>
      <div className="flex h-[24px] items-center pl-[2px]">
        <Ico s={16}><rect x="1" y="3" width="13" height="10" fill="#d9f0f2" stroke="#235f6b" /><path d="M1 3h13v2H1z" fill="#2c8894" /><text x="7.500" y="13" fontSize="10" fontWeight="bold" textAnchor="middle" fill="#114a54">T</text></Ico>
        <span className="ml-[6px]"><Ico s={16}><rect x="1" y="2" width="12" height="9" fill="#e6eef8" stroke="#3a6296" /><circle cx="6" cy="8" r="3.500" fill="#fff" stroke="#222" /><path d="M7 8h7v6H7z" fill="#b8913a" stroke="#4c3910" /></Ico></span>
        <span className="ml-[7px]"><Ico s={16}><circle cx="3.500" cy="4" r="2" fill="none" stroke="#2b5a50" /><path d="M4 3l3-2M7 6.500h8M7 9.500h8M7 12.500h8" stroke="#2f7ea0" strokeWidth="1.300" /></Ico></span>
        <span className="ml-[8px]"><LineIcon /></span>
        <Field id="result" label="Result feature" value="LN1" className="ml-[4px] w-[68px] shrink-0 bg-[#a3a5b0]" />
      </div>
      <div className="flex flex-col gap-[6px] pt-[3px]">
        {["X", "Y", "Z", ""].map((a) => (
          <div key={a} className="flex h-[27px] items-center bg-black pl-1">
            <svg width="18" height="18" viewBox="0 0 18 18" aria-hidden="true">
              {a ? (
                <g>
                  <path d="M2.500 3v12.500h12M.5 5l2-3 2 3M12.500 13.500l3 2-3 2" fill="none" stroke="#efe39a" strokeWidth="1.400" />
                  <text x="11" y="12" fontSize="13" fontWeight="bold" textAnchor="middle" fill="#efe39a">{a}</text>
                </g>
              ) : (
                <path d="M1 10h15" stroke="#e8d774" strokeWidth="3" />
              )}
            </svg>
          </div>
        ))}
      </div>
    </div>
  );
}

function StatusBar() {
  const box = "shrink-0 border-[#3a3a3e] bg-[#d4d4d8] shadow-[0_0_0_1px_#77777c]";
  return (
    <footer className="flex h-[31px] shrink-0 items-center gap-[14px] overflow-hidden border-b border-t border-b-[#a8a8ac] border-t-[#2b2b2e] bg-[linear-gradient(#646469,#4a4a4f_28px,#151517_29px)] pb-px pl-[792px]">
      <Combo dark label="Plane" value="Auto WkPlane" options={["Auto WkPlane", "XY"]} className={`${box} w-[96px]`} />
      <Combo dark label="Unit" value="Millimeter" options={["Millimeter", "Inch"]} className={`${box} w-[86px]`} />
      <Combo dark label="Angle" value="Degree" options={["Degree", "Radian"]} className={`${box} w-[86px]`} />
      <Combo dark label="System" value="Cart" options={["Cart", "Polar"]} className={`${box} w-[86px]`} />
      <output className="ml-auto flex h-[18px] w-[85px] shrink-0 items-center border border-r-0 border-[#44444a] bg-[#85858b] pl-1 text-[11px] text-black">CX1</output>
    </footer>
  );
}

export default function App() {
  return (
    <div className="flex min-h-screen flex-col overflow-hidden bg-[#6e6e74] font-['DejaVu_Sans_Condensed','DejaVu_Sans',sans-serif]">
      <Header />
      <main className="flex flex-1 gap-2 bg-[linear-gradient(#929292,#6e6e74_32px)] pb-[6px]">
        <LeftColumn />
        <section className="flex min-w-0 flex-1 flex-col">
          <ViewTabs />
          <div className="flex flex-1 rounded-l-lg border border-r-0 border-[#3c3c40] bg-[#d6d6da] pb-[6px] pl-[5px] pt-0.5">
            <CameraView />
            <Sidebar />
          </div>
        </section>
      </main>
      <div className="flex h-[165px] shrink-0 gap-[5px] overflow-hidden border-t border-[#3c3c40] bg-[#d0d0d4] py-1">
        <AxisButtons />
        <CoordinateSetup />
        <Readout />
        <JogPanel />
        <ResultPanel />
      </div>
      <StatusBar />
    </div>
  );
}
